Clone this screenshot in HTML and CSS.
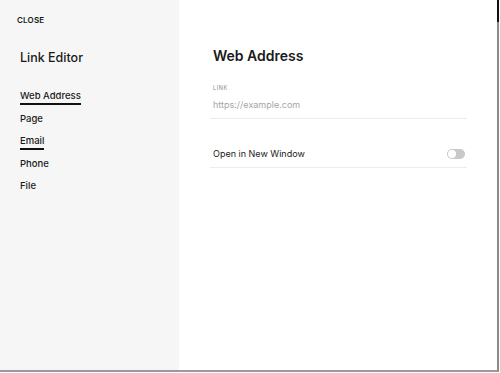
FILE: index.html
```html
<!DOCTYPE html>
<html lang="en">
<head>
    <meta charset="UTF-8">
    <meta name="viewport" content="width=device-width, initial-scale=1.0">
    <title>Link Editor</title>
    <link rel="stylesheet" href="styles.css">
</head>
<body>
    <div class="frame">
        <div class="sidebar">
            <div class="close">CLOSE</div>
            <h2 class="title">Link Editor</h2>
            <nav class="menu">
                <span class="item active">Web Address</span>
                <span class="item">Page</span>
                <span class="item active">Email</span>
                <span class="item">Phone</span>
                <span class="item">File</span>
            </nav>
        </div>
        <div class="panel">
            <h1 class="heading">Web Address</h1>
            <div class="field">
                <div class="label">LINK</div>
                <div class="placeholder">https://example.com</div>
            </div>
            <div class="row">
                <span>Open in New Window</span>
                <span class="toggle"><span class="knob"></span></span>
            </div>
        </div>
    </div>
</body>
</html>
```

FILE: styles.css
```css
body {
    margin: 0;
    font-family: 'Inter', 'Liberation Sans', sans-serif;
    color: #1a1a1a;
    background: #fff;
}
.frame {
    display: flex;
    width: 497px;
    height: 370px;
    border-right: 2px solid #8a8a8a;
    border-bottom: 2px solid #9a9a9a;
    position: relative;
}
.frame::after {
    content: "";
    position: absolute;
    right: -2px;
    top: 0;
    width: 2px;
    height: 22px;
    background: #111;
}
.sidebar {
    width: 179px;
    background: #f6f6f6;
    padding: 15px 0 0 17px;
    box-sizing: border-box;
}
.close {
    font-size: 8px;
    font-weight: 600;
    letter-spacing: 0.2px;
}
.title {
    font-size: 12.5px;
    font-weight: 500;
    margin: 25px 0 0 3px;
}
.menu {
    display: flex;
    flex-direction: column;
    align-items: flex-start;
    gap: 6.5px;
    margin: 24px 0 0 3px;
}
.item {
    font-size: 9.5px;
    font-weight: 500;
    line-height: 14px;
    border-bottom: 2px solid transparent;
}
.item.active {
    border-bottom-color: #111;
}
.panel {
    flex: 1;
    padding: 47px 30px 0 31px;
}
.heading {
    font-size: 14px;
    font-weight: 600;
    margin: 0 0 0 3px;
}
.field {
    margin-top: 21px;
    padding: 0 0 8px 3px;
    border-bottom: 1px solid #ececec;
}
.label {
    font-size: 5.5px;
    letter-spacing: 0.6px;
    color: #8a8a8a;
}
.placeholder {
    font-size: 9px;
    color: #a5a5a5;
    margin-top: 8px;
}
.row {
    display: flex;
    justify-content: space-between;
    align-items: center;
    margin-top: 29px;
    padding: 0 2px 8px 3px;
    border-bottom: 1px solid #ececec;
    font-size: 9px;
}
.toggle {
    width: 18px;
    height: 10px;
    border-radius: 5px;
    background: #c9c9c9;
    padding: 1px;
    box-sizing: border-box;
}
.knob {
    display: block;
    width: 8px;
    height: 8px;
    border-radius: 50%;
    background: #fff;
}
```
